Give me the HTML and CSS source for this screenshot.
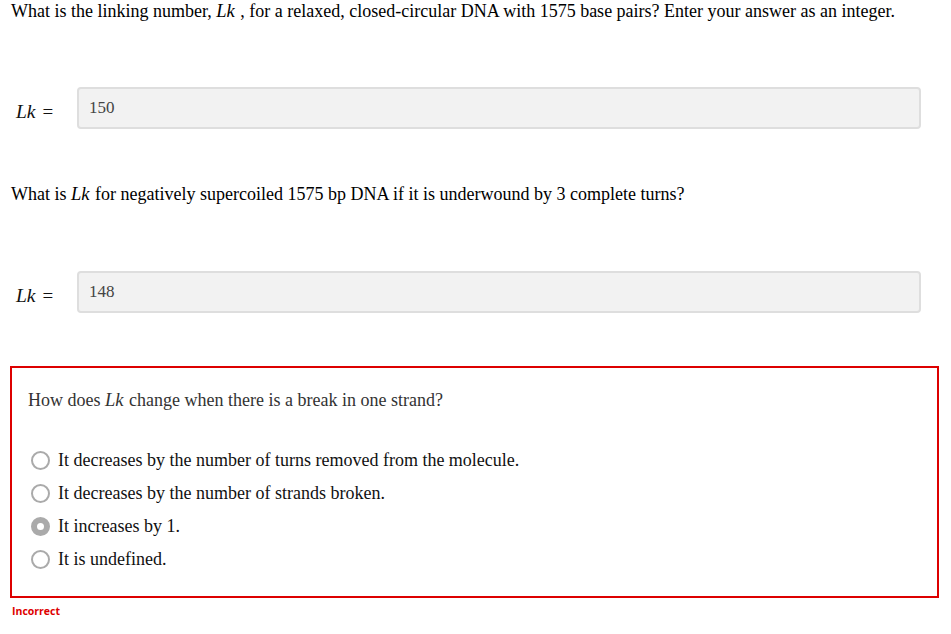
FILE: index.html
```html
<!DOCTYPE html>
<html>
<head>
<meta charset="utf-8">
<link rel="stylesheet" href="styles.css">
</head>
<body>
<div class="page">
  <p class="question q1">What is the linking number, <i class="var">Lk</i> , for a relaxed, closed-circular DNA with 1575 base pairs? Enter your answer as an integer.</p>
  <div class="answer-row a1">
    <label class="lbl"><i class="var">Lk</i><span class="eq">=</span></label>
    <div class="field">150</div>
  </div>
  <p class="question q2">What is <i class="var">Lk</i> for negatively supercoiled 1575 bp DNA if it is underwound by 3 complete turns?</p>
  <div class="answer-row a2">
    <label class="lbl"><i class="var">Lk</i><span class="eq">=</span></label>
    <div class="field">148</div>
  </div>
  <div class="mc-box">
    <p class="mc-q">How does <i class="var">Lk</i> change when there is a break in one strand?</p>
    <ul class="options">
      <li class="option"><span class="radio"></span>It decreases by the number of turns removed from the molecule.</li>
      <li class="option"><span class="radio"></span>It decreases by the number of strands broken.</li>
      <li class="option"><span class="radio checked"></span>It increases by 1.</li>
      <li class="option"><span class="radio"></span>It is undefined.</li>
    </ul>
  </div>
  <div class="status">Incorrect</div>
</div>
</body>
</html>
```
FILE: styles.css
```css
html, body {
  margin: 0;
  padding: 0;
  background: #fff;
}
body {
  font-family: "Liberation Serif", "Times New Roman", serif;
  font-size: 18px;
  color: #000;
}
.page {
  padding: 0 12px 0 10px;
}
.var {
  font-style: italic;
  font-size: 18.5px;
  padding-right: 1px;
}
.question {
  margin: 0;
  line-height: 20px;
  padding-left: 1px;
}
.q1 {
  padding-top: 1px;
}
.answer-row {
  display: flex;
  align-items: center;
}
.a1 { margin-top: 66px; }
.q2 { margin-top: 55px; }
.a2 { margin-top: 67px; }
.lbl {
  width: 67px;
  padding-left: 6px;
  padding-top: 8px;
  box-sizing: border-box;
  color: #111;
  flex: none;
}
.lbl .var {
  font-size: 19.5px;
}
.eq {
  margin-left: 6px;
  font-size: 19px;
}
.field {
  flex: 1;
  height: 42px;
  box-sizing: border-box;
  background: #f2f2f2;
  border: 2px solid #dedede;
  border-radius: 4px;
  padding: 9px 10px 0 10px;
  color: #444;
  line-height: 20px;
  font-size: 17px;
  margin-right: 18px;
}
.mc-box {
  margin-top: 53px;
  border: 2px solid #dd0000;
  padding: 22px 16px 27px 16px;
}
.mc-q {
  margin: 0;
  line-height: 20px;
  color: #333;
}
.options {
  list-style: none;
  margin: 40px 0 0 0;
  padding: 0;
}
.option {
  display: flex;
  align-items: center;
  height: 20px;
  line-height: 20px;
  margin-bottom: 13px;
  color: #111;
}
.option:last-child { margin-bottom: 0; }
.radio {
  width: 19px;
  height: 19px;
  box-sizing: border-box;
  border: 2px solid #aaa;
  border-radius: 50%;
  background: #fff;
  margin-left: 3px;
  margin-right: 8px;
  flex: none;
}
.radio.checked {
  background: #fff;
  border: 6px solid #aaa;
}
.status {
  margin-top: 6px;
  padding-left: 2px;
  font-family: "Open Sans", "Lato", sans-serif;
  font-weight: 700;
  font-size: 10.5px;
  color: #dd0000;
  line-height: 14px;
}
```
